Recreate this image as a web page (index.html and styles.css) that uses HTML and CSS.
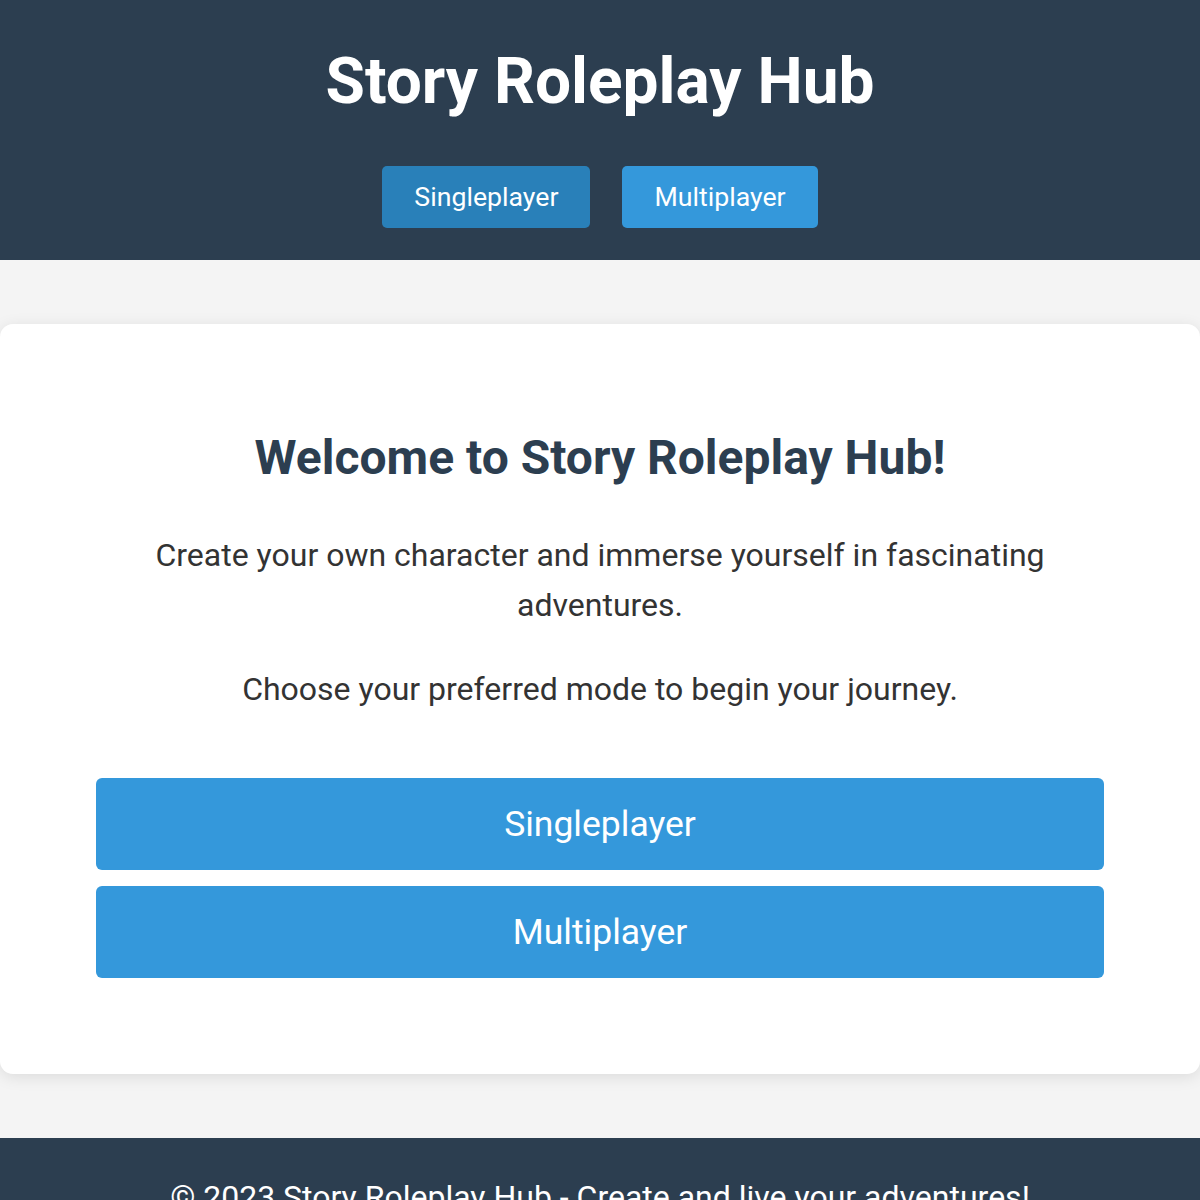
FILE: index.html
```html
<!DOCTYPE html>
<html>
    <head>
        <meta charset="utf-8">
        <title>Story Roleplay Hub</title>
        <link rel="stylesheet" href="styles.css">
    </head>
    <body>
        <header class="site-header">
            <h1 class="site-title">Story Roleplay Hub</h1>
            <nav class="nav">
                <a href="javascript:;" class="nav-btn active">Singleplayer</a>
                <a href="javascript:;" class="nav-btn">Multiplayer</a>
            </nav>
        </header>
        <main class="main">
            <section class="card">
                <h2 class="welcome">Welcome to Story Roleplay Hub!</h2>
                <p class="intro">Create your own character and immerse yourself in fascinating adventures.</p>
                <p class="intro">Choose your preferred mode to begin your journey.</p>
                <div class="modes">
                    <a href="javascript:;" class="mode-btn">Singleplayer</a>
                    <a href="javascript:;" class="mode-btn">Multiplayer</a>
                </div>
            </section>
        </main>
        <footer class="site-footer">
            <p>&copy; 2023 Story Roleplay Hub - Create and live your adventures!</p>
        </footer>
    </body>
</html>
```

FILE: styles.css
```css
*{
    margin: 0;
    padding: 0;
    box-sizing: border-box;
}
body{
    font-family: Roboto, "Liberation Sans", sans-serif;
    background-color: #f4f4f4;
    color: #333;
}
.site-header{
    background-color: #2c3e50;
    color: #fff;
    text-align: center;
    padding: 44px 0 32px;
    height: 260px;
}
.site-title{
    font-size: 64px;
    font-weight: 700;
    line-height: 76px;
}
.nav{
    display: flex;
    justify-content: center;
    gap: 32px;
    margin-top: 46px;
}
.nav-btn{
    display: block;
    background-color: #3498db;
    color: #fff;
    text-decoration: none;
    font-size: 26.7px;
    line-height: 30px;
    padding: 16px 32px;
    border-radius: 5px;
}
.nav-btn.active{
    background-color: #2980b9;
}
.main{
    padding: 64px 0;
}
.card{
    background-color: #fff;
    border-radius: 13px;
    box-shadow: 0 3px 16px rgba(0,0,0,0.1);
    padding: 106px 96px 96px;
    text-align: center;
}
.welcome{
    color: #2c3e50;
    font-size: 48px;
    font-weight: 700;
    line-height: 56px;
    margin-bottom: 44px;
}
.intro{
    font-size: 32px;
    line-height: 50px;
    margin-bottom: 34px;
    padding: 0 50px;
}
.modes{
    display: flex;
    flex-direction: column;
    gap: 16px;
    margin-top: 64px;
}
.mode-btn{
    display: block;
    background-color: #3498db;
    color: #fff;
    text-decoration: none;
    font-size: 35.5px;
    line-height: 40px;
    padding: 26px 0;
    border-radius: 6px;
}
.site-footer{
    background-color: #2c3e50;
    color: #fff;
    text-align: center;
    padding: 40px 0;
    font-size: 32px;
}
```
